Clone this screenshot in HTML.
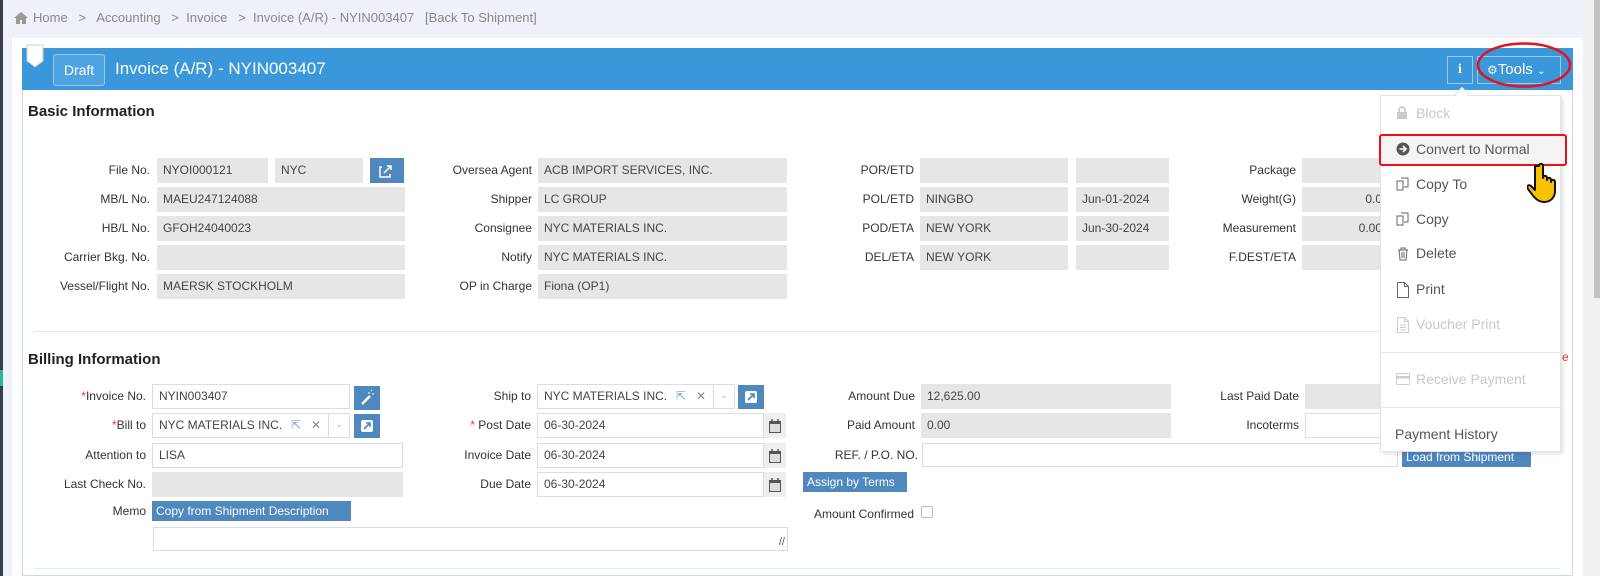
<!DOCTYPE html>
<html><head><meta charset="utf-8"><style>
*{box-sizing:border-box;margin:0;padding:0}
body{width:1600px;height:576px;overflow:hidden;background:#eef1f7;font-family:"Liberation Sans",sans-serif;font-size:12px;color:#333;position:relative}
.a{position:absolute}
.lbl{position:absolute;text-align:right;white-space:nowrap;font-size:12px;color:#333;line-height:24px}
.in{position:absolute;background:#e6e6e6;height:25px;line-height:25px;padding-left:6px;font-size:12px;color:#444;white-space:nowrap;overflow:hidden}
.wi{position:absolute;background:#fff;border:1px solid #ddd;height:25px;line-height:23px;padding-left:6px;font-size:12px;color:#444;white-space:nowrap;overflow:hidden}
.btn{position:absolute;background:#4f87bf;color:#fff;font-size:12px;line-height:20px;padding:0 4px;white-space:nowrap}
.sq{position:absolute;background:#4f87bf;width:26px;height:24px}
.hl{position:absolute;height:1px;background:#e8e8e8}
.cal{position:absolute;width:22px;height:25px;background:#eee}
.mi{position:absolute;left:1388px;font-size:14px;color:#555;white-space:nowrap;line-height:20px}
.mi.d{color:#c8c8c8}
</style></head><body>
<div class="a" style="left:0;top:0;width:3px;height:576px;background:#3a3f47"></div>
<div class="a" style="left:0;top:370px;width:3px;height:16px;background:#2bb5a0"></div>
<!-- breadcrumb -->
<svg class="a" style="left:14px;top:12px" width="14" height="12" viewBox="0 0 14 12"><path d="M7 0L0 6h2v6h4V8h2v4h4V6h2z" fill="#999"/></svg>
<div class="a" style="left:33px;top:10px;color:#888;font-size:13px;white-space:nowrap;line-height:16px">Home &nbsp;&nbsp;&gt;&nbsp;&nbsp; Accounting &nbsp;&nbsp;&gt;&nbsp; Invoice &nbsp;&nbsp;&gt;&nbsp; Invoice (A/R) - NYIN003407 &nbsp;&nbsp;[Back To Shipment]</div>
<!-- panel -->
<div class="a" style="left:12px;top:38px;width:1571px;height:538px;background:#fff"></div>
<div class="a" style="left:22px;top:48px;width:1551px;height:528px;border:1px solid #c5dbf0;border-top:none"></div>
<div class="a" style="left:22px;top:48px;width:1551px;height:42px;background:#3a97d9"></div>
<svg class="a" style="left:26px;top:44px" width="18" height="24" viewBox="0 0 18 24"><path d="M1 1h16v16l-8 6-8-6z" fill="#fff" stroke="#ccc"/></svg>
<div class="a" style="left:53px;top:54px;width:52px;height:32px;border:1px solid #9cc8ec;border-radius:3px;background:#4ea4e2;color:#fff;font-size:14px;line-height:30px;text-align:center">Draft</div>
<div class="a" style="left:115px;top:57px;color:#fff;font-size:17px;line-height:24px;white-space:nowrap">Invoice (A/R) - NYIN003407</div>
<div class="a" style="left:1447px;top:56px;width:26px;height:28px;border:1px solid #9cc8ec;color:#fff;font-weight:bold;font-size:14px;text-align:center;line-height:26px;font-family:'Liberation Serif',serif">i</div>
<div class="a" style="left:1477px;top:56px;width:84px;height:28px;border:1px solid #9cc8ec;color:#fff;font-size:15px;line-height:26px;padding-left:9px;white-space:nowrap"><span style="font-size:12px">⚙</span>Tools <span style="font-size:10px">⌄</span></div>
<svg class="a" style="left:1476px;top:42px" width="97" height="47"><ellipse cx="48" cy="23" rx="46" ry="21.5" fill="none" stroke="#e8101a" stroke-width="2.5"/></svg>
<!-- Basic info -->
<div class="a" style="left:28px;top:103px;font-size:15px;font-weight:bold;color:#222">Basic Information</div>
<div class="lbl" style="right:1450px;top:158px">File No.</div>
<div class="in" style="left:157px;top:158px;width:111px">NYOI000121</div>
<div class="in" style="left:275px;top:158px;width:88px">NYC</div>
<div class="sq" style="left:370px;top:158px;width:34px;height:25px"><svg width="34" height="25"><path d="M12 9h-2v10h10v-3M14 15l7-7M17 8h4v4" stroke="#fff" stroke-width="1.5" fill="none"/></svg></div>
<div class="lbl" style="right:1450px;top:187px">MB/L No.</div><div class="in" style="left:157px;top:187px;width:248px">MAEU247124088</div>
<div class="lbl" style="right:1450px;top:216px">HB/L No.</div><div class="in" style="left:157px;top:216px;width:248px">GFOH24040023</div>
<div class="lbl" style="right:1450px;top:245px">Carrier Bkg. No.</div><div class="in" style="left:157px;top:245px;width:248px"></div>
<div class="lbl" style="right:1450px;top:274px">Vessel/Flight No.</div><div class="in" style="left:157px;top:274px;width:248px">MAERSK STOCKHOLM</div>

<div class="lbl" style="right:1068px;top:158px">Oversea Agent</div><div class="in" style="left:538px;top:158px;width:249px">ACB IMPORT SERVICES, INC.</div>
<div class="lbl" style="right:1068px;top:187px">Shipper</div><div class="in" style="left:538px;top:187px;width:249px">LC GROUP</div>
<div class="lbl" style="right:1068px;top:216px">Consignee</div><div class="in" style="left:538px;top:216px;width:249px">NYC MATERIALS INC.</div>
<div class="lbl" style="right:1068px;top:245px">Notify</div><div class="in" style="left:538px;top:245px;width:249px">NYC MATERIALS INC.</div>
<div class="lbl" style="right:1068px;top:274px">OP in Charge</div><div class="in" style="left:538px;top:274px;width:249px">Fiona (OP1)</div>

<div class="lbl" style="right:686px;top:158px">POR/ETD</div><div class="in" style="left:920px;top:158px;width:148px"></div><div class="in" style="left:1076px;top:158px;width:93px"></div>
<div class="lbl" style="right:686px;top:187px">POL/ETD</div><div class="in" style="left:920px;top:187px;width:148px">NINGBO</div><div class="in" style="left:1076px;top:187px;width:93px">Jun-01-2024</div>
<div class="lbl" style="right:686px;top:216px">POD/ETA</div><div class="in" style="left:920px;top:216px;width:148px">NEW YORK</div><div class="in" style="left:1076px;top:216px;width:93px">Jun-30-2024</div>
<div class="lbl" style="right:686px;top:245px">DEL/ETA</div><div class="in" style="left:920px;top:245px;width:148px">NEW YORK</div><div class="in" style="left:1076px;top:245px;width:93px"></div>

<div class="lbl" style="right:304px;top:158px">Package</div><div class="in" style="left:1302px;top:158px;width:80px"></div>
<div class="lbl" style="right:304px;top:187px">Weight(G)</div><div class="in" style="left:1302px;top:187px;width:80px;text-align:right;padding-right:0">0.0</div>
<div class="lbl" style="right:304px;top:216px">Measurement</div><div class="in" style="left:1302px;top:216px;width:80px;text-align:right;padding-right:0">0.00</div>
<div class="lbl" style="right:304px;top:245px">F.DEST/ETA</div><div class="in" style="left:1302px;top:245px;width:80px"></div>

<div class="hl" style="left:34px;top:331px;width:1526px"></div>
<!-- Billing -->
<div class="a" style="left:28px;top:351px;font-size:15px;font-weight:bold;color:#222">Billing Information</div>
<div class="lbl" style="right:1454px;top:384px"><span style="color:#e33">*</span>Invoice No.</div>
<div class="wi" style="left:152px;top:384px;width:198px">NYIN003407</div>
<div class="sq" style="left:354px;top:386px"><svg width="26" height="24"><path d="M8 18l8-8" stroke="#fff" stroke-width="2.5"/><path d="M15 6v2M18 8h2M17 5l1-1" stroke="#fff" stroke-width="1"/></svg></div>
<div class="lbl" style="right:1454px;top:413px"><span style="color:#e33">*</span>Bill to</div>
<div class="wi" style="left:152px;top:413px;width:198px">NYC MATERIALS INC.<span class="a" style="left:138px;top:0;color:#7aa7d6">⇱</span><span class="a" style="left:158px;top:0;color:#888">✕</span><span class="a" style="left:175px;top:-1px;height:24px;border-left:1px solid #ddd;padding-left:6px;color:#bbb;font-size:10px">⌄</span></div>
<div class="sq" style="left:354px;top:414px"><svg width="26" height="24"><rect x="7" y="6" width="12" height="12" rx="2" fill="#fff"/><path d="M10 15l6-6M12 9h4v4" stroke="#4f87bf" stroke-width="1.6" fill="none"/></svg></div>
<div class="lbl" style="right:1454px;top:443px">Attention to</div><div class="wi" style="left:152px;top:443px;width:251px">LISA</div>
<div class="lbl" style="right:1454px;top:472px">Last Check No.</div><div class="in" style="left:152px;top:472px;width:251px"></div>
<div class="lbl" style="right:1454px;top:499px">Memo</div>
<div class="btn" style="left:152px;top:501px;width:199px">Copy from Shipment Description</div>
<div class="wi" style="left:153px;top:527px;width:635px;height:24px"><span class="a" style="right:2px;bottom:-4px;color:#555;font-size:11px">//</span></div>

<div class="lbl" style="right:1069px;top:384px">Ship to</div>
<div class="wi" style="left:537px;top:384px;width:198px">NYC MATERIALS INC.<span class="a" style="left:138px;top:0;color:#7aa7d6">⇱</span><span class="a" style="left:158px;top:0;color:#888">✕</span><span class="a" style="left:175px;top:-1px;height:24px;border-left:1px solid #ddd;padding-left:6px;color:#bbb;font-size:10px">⌄</span></div>
<div class="sq" style="left:738px;top:385px"><svg width="26" height="24"><rect x="7" y="6" width="12" height="12" rx="2" fill="#fff"/><path d="M10 15l6-6M12 9h4v4" stroke="#4f87bf" stroke-width="1.6" fill="none"/></svg></div>
<div class="lbl" style="right:1069px;top:413px"><span style="color:#e33">*</span> Post Date</div>
<div class="lbl" style="right:1069px;top:443px">Invoice Date</div>
<div class="lbl" style="right:1069px;top:472px">Due Date</div>
<div class="wi" style="left:537px;top:413px;width:227px">06-30-2024</div><div class="cal" style="left:764px;top:413px"></div>
<div class="wi" style="left:537px;top:443px;width:227px">06-30-2024</div><div class="cal" style="left:764px;top:443px"></div>
<div class="wi" style="left:537px;top:472px;width:227px">06-30-2024</div><div class="cal" style="left:764px;top:472px"></div>
<svg class="a" style="left:768px;top:418px" width="14" height="16"><rect x="1" y="3" width="12" height="12" fill="#555"/><rect x="2" y="6" width="10" height="8" fill="#ddd"/><path d="M4 1v4M10 1v4" stroke="#555" stroke-width="1.5"/></svg>
<svg class="a" style="left:768px;top:448px" width="14" height="16"><rect x="1" y="3" width="12" height="12" fill="#555"/><rect x="2" y="6" width="10" height="8" fill="#ddd"/><path d="M4 1v4M10 1v4" stroke="#555" stroke-width="1.5"/></svg>
<svg class="a" style="left:768px;top:477px" width="14" height="16"><rect x="1" y="3" width="12" height="12" fill="#555"/><rect x="2" y="6" width="10" height="8" fill="#ddd"/><path d="M4 1v4M10 1v4" stroke="#555" stroke-width="1.5"/></svg>

<div class="lbl" style="right:685px;top:384px">Amount Due</div><div class="in" style="left:921px;top:384px;width:250px">12,625.00</div>
<div class="lbl" style="right:685px;top:413px">Paid Amount</div><div class="in" style="left:921px;top:413px;width:250px">0.00</div>
<div class="lbl" style="right:682px;top:443px">REF. / P.O. NO.</div><div class="wi" style="left:922px;top:443px;width:476px;height:24px"></div>
<div class="btn" style="left:803px;top:472px;width:104px;height:20px">Assign by Terms</div>
<div class="lbl" style="right:686px;top:502px">Amount Confirmed</div>
<div class="a" style="left:921px;top:506px;width:12px;height:12px;border:1px solid #bbb;border-radius:2px;background:#fff"></div>

<div class="lbl" style="right:301px;top:384px">Last Paid Date</div><div class="in" style="left:1305px;top:384px;width:80px"></div>
<div class="lbl" style="right:301px;top:413px">Incoterms</div><div class="wi" style="left:1305px;top:413px;width:80px"></div>
<div class="btn" style="left:1402px;top:447px;width:129px;height:20px;line-height:20px">Load from Shipment</div>
<div class="a" style="left:1562px;top:350px;color:#e33;font-size:12px">e</div>
<div class="hl" style="left:34px;top:568px;width:1526px"></div>

<!-- dropdown -->
<div class="a" style="left:1380px;top:95px;width:181px;height:357px;background:#fff;border:1px solid #e4e4e4;box-shadow:2px 2px 4px rgba(0,0,0,.12)"></div>
<div class="a" style="left:1457px;top:89px;width:10px;height:10px;background:#fff;transform:rotate(45deg);border-left:1px solid #e4e4e4;border-top:1px solid #e4e4e4"></div>
<div class="a" style="left:1380px;top:352px;width:181px;height:1px;background:#e8e8e8"></div>
<div class="a" style="left:1380px;top:407px;width:181px;height:1px;background:#e8e8e8"></div>
<div class="a" style="left:1379px;top:134px;width:188px;height:32px;background:#f4f4f4;border:2.5px solid #e8101a;border-radius:3px"></div>
<svg class="a" style="left:1396px;top:106px" width="12" height="14"><rect x="1" y="6" width="10" height="7" fill="#ccc"/><path d="M3 6V4a3 3 0 016 0v2" stroke="#ccc" stroke-width="1.8" fill="none"/></svg>
<div class="mi d" style="left:1416px;top:103px">Block</div>
<svg class="a" style="left:1396px;top:142px" width="14" height="14"><circle cx="7" cy="7" r="6.5" fill="#555"/><path d="M3.5 7h6M7 4l3 3-3 3" stroke="#fff" stroke-width="1.6" fill="none"/></svg>
<div class="mi" style="left:1416px;top:139px">Convert to Normal</div>
<svg class="a" style="left:1396px;top:177px" width="14" height="15"><path d="M1 4h6v9H1zM5 1h7v9H8" fill="none" stroke="#666"/></svg>
<div class="mi" style="left:1416px;top:174px">Copy To</div>
<svg class="a" style="left:1396px;top:212px" width="14" height="15"><path d="M1 4h6v9H1zM5 1h7v9H8" fill="none" stroke="#666"/></svg>
<div class="mi" style="left:1416px;top:209px">Copy</div>
<svg class="a" style="left:1397px;top:247px" width="12" height="14"><path d="M1 3h10M4 3V1h4v2M2 3l1 10h6l1-10M5 5v6M7 5v6" fill="none" stroke="#666"/></svg>
<div class="mi" style="left:1416px;top:243px">Delete</div>
<svg class="a" style="left:1397px;top:282px" width="12" height="16"><path d="M.5.5h7l4 4v11H.5z M7.5.5v4h4" fill="none" stroke="#666"/></svg>
<div class="mi" style="left:1416px;top:279px">Print</div>
<svg class="a" style="left:1397px;top:317px" width="12" height="16"><path d="M.5.5h7l4 4v11H.5z M7.5.5v4h4M3 8h6M3 10.5h6M3 13h6" fill="none" stroke="#ccc"/></svg>
<div class="mi d" style="left:1416px;top:314px">Voucher Print</div>
<svg class="a" style="left:1396px;top:373px" width="14" height="12"><rect x=".5" y=".5" width="13" height="11" rx="1" fill="none" stroke="#ccc"/><rect x="1" y="3" width="12" height="2.5" fill="#ccc"/></svg>
<div class="mi d" style="left:1416px;top:369px">Receive Payment</div>
<div class="mi" style="left:1395px;top:424px">Payment History</div>
<!-- hand cursor -->
<svg class="a" style="left:1527px;top:162px" width="38" height="42" viewBox="0 0 38 42"><path d="M12 4c0-3 4-3 4 0v12c0-3 4-3 4 0v2c0-3 4-3 4 0v2c0-3 4-3 4 0v9c0 6-4 11-11 11-5 0-9-3-13-9l-3-4c-2-3 1-5 3-3l4 4V4z" fill="#f7c300" stroke="#111" stroke-width="2" stroke-linejoin="round"/></svg>
<!-- scrollbar -->
<div class="a" style="left:1583px;top:0;width:17px;height:576px;background:#f1f1f1"></div>
<div class="a" style="left:1594px;top:0;width:6px;height:298px;background:#c1c1c1"></div>
</body></html>
